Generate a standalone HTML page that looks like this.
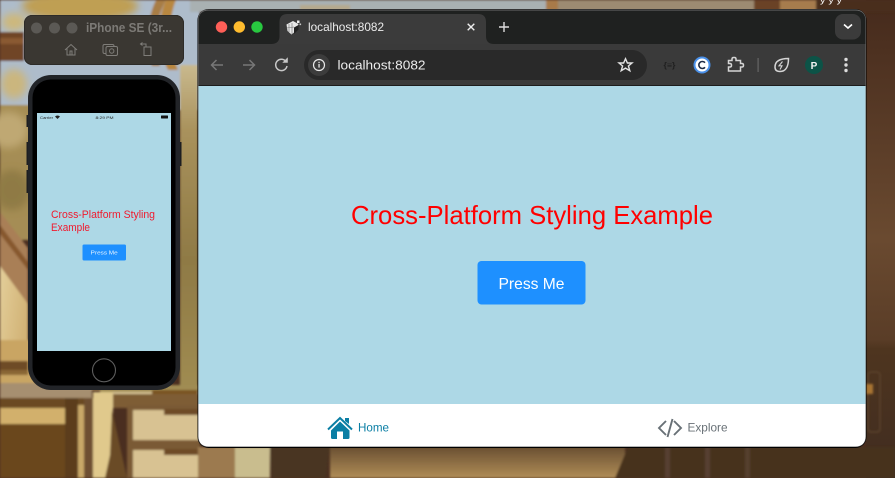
<!DOCTYPE html>
<html><head><meta charset="utf-8"><style>
html,body{margin:0;padding:0;width:895px;height:478px;overflow:hidden;background:#4a2e20}
svg{display:block}
text{font-family:"Liberation Sans",sans-serif}
</style></head><body>
<svg width="895" height="478" viewBox="0 0 895 478" xmlns="http://www.w3.org/2000/svg">
<defs>
<filter id="b" x="-10%" y="-10%" width="120%" height="120%"><feGaussianBlur stdDeviation="1"/></filter>
<filter id="c" x="-30%" y="-30%" width="160%" height="160%"><feGaussianBlur stdDeviation="4"/></filter>
<linearGradient id="rg" x1="0" y1="0" x2="0" y2="1"><stop offset="0" stop-color="#452a1c"/><stop offset=".5" stop-color="#6a4a30"/><stop offset=".71" stop-color="#5a3d27"/><stop offset=".73" stop-color="#4e351f"/><stop offset="1" stop-color="#402c20"/></linearGradient>
<linearGradient id="bg" x1="0" y1="0" x2="0" y2="1"><stop offset="0" stop-color="#6a5032"/><stop offset="1" stop-color="#b08d57"/></linearGradient>
<linearGradient id="lg" x1="0" y1="0" x2="1" y2="1"><stop offset="0" stop-color="#e4cf9a"/><stop offset="1" stop-color="#c59f5e"/></linearGradient>
<linearGradient id="mg" x1="0" y1="0" x2="0" y2="1"><stop offset="0" stop-color="#c9b98e"/><stop offset=".2" stop-color="#a9925c"/><stop offset=".6" stop-color="#8f7a45"/><stop offset="1" stop-color="#a08c52"/></linearGradient>
</defs>

<!-- wallpaper -->
<rect width="895" height="478" fill="#4a2e20"/>
<rect x="866" y="0" width="29" height="478" fill="url(#rg)"/>
<g filter="url(#b)">
<rect x="0" y="0" width="200" height="110" fill="#aebccb"/>
<rect x="190" y="0" width="360" height="12" fill="#a9b1b2"/>
<rect x="300" y="5" width="50" height="6" fill="#b5a98d"/>
<rect x="546" y="0" width="12" height="12" fill="#a87a48"/>
<rect x="558" y="0" width="196" height="12" fill="#9c8b72"/>
<rect x="754" y="0" width="26" height="12" fill="#6a4226"/>
<rect x="780" y="0" width="36" height="12" fill="#a67b4e"/>
<rect x="816" y="0" width="80" height="12" fill="#4a2d1e"/>
<rect x="0" y="105" width="30" height="135" fill="#a58d54"/>
<g filter="url(#c)">
<ellipse cx="80" cy="6" rx="58" ry="16" fill="#bf9f52"/>
<ellipse cx="14" cy="22" rx="12" ry="9" fill="#cdb87c"/>
<ellipse cx="14" cy="84" rx="13" ry="15" fill="#cbb67e"/>
<ellipse cx="8" cy="130" rx="20" ry="18" fill="#bfa873"/>
<ellipse cx="12" cy="190" rx="18" ry="20" fill="#8f7a45"/>
</g>
<rect x="0" y="32" width="24" height="29" fill="#6f4526"/>
<rect x="0" y="38" width="24" height="6" fill="#8a5a32"/>
<path d="M156 0C146 20 146 50 152 66H160C154 45 155 20 166 0Z" fill="#a87d45"/>
<path d="M166 0C156 20 158 50 168 70H178C168 45 168 20 176 0Z" fill="#b8873f"/>
<rect x="180" y="65" width="18" height="325" fill="url(#mg)"/>
<path d="M0 212L28 248V306L0 270Z" fill="#a97f56"/>
<path d="M0 225L28 262V270L0 234Z" fill="#87592f"/>
<path d="M0 266L28 304V478H0Z" fill="url(#lg)"/>
<rect x="0" y="340" width="100" height="50" fill="#c9a564"/>
<rect x="0" y="361" width="28" height="9" fill="#6e4c28"/>
<rect x="0" y="370" width="28" height="5" fill="#8a6636"/>
<rect x="0" y="383" width="92" height="15" fill="#a68f6f"/>
<rect x="100" y="385" width="100" height="8" fill="#a08c52"/>
<rect x="0" y="398" width="84" height="11" fill="#6a4a22"/>
<rect x="0" y="408" width="65" height="16" fill="#d2b06c"/>
<rect x="0" y="424" width="65" height="54" fill="#6a471d"/>
<rect x="65" y="398" width="13" height="80" fill="#5c3e1c"/>
<rect x="78" y="405" width="6" height="73" fill="#c9a868"/>
<rect x="84" y="398" width="9" height="80" fill="#6e5030"/>
<rect x="93" y="392" width="20" height="86" fill="#e0c98c"/>
<path d="M112 410L127 478H105L110 455Z" fill="#6b4c26"/>
<rect x="113" y="392" width="87" height="16" fill="#7e5d36"/>
<rect x="113" y="392" width="87" height="2" fill="#d8c496"/>
<rect x="127" y="405" width="73" height="73" fill="#7a5a35"/>
<rect x="133" y="410" width="67" height="30" fill="#d8c292"/>
<rect x="133" y="450" width="67" height="28" fill="#d8c292"/>
<rect x="164" y="409" width="36" height="6" fill="#6e4c28"/>
<rect x="164" y="449" width="36" height="6" fill="#6e4c28"/>
<rect x="152" y="390" width="46" height="4" fill="#7a5520"/>
<rect x="198" y="447" width="37" height="31" fill="#9c7a50"/>
<rect x="235" y="447" width="35" height="31" fill="#c9bd8e"/>
<path d="M270 447H330L326 478H272Z" fill="#4a3520"/>
<rect x="330" y="447" width="295" height="31" fill="url(#bg)"/>
<path d="M628 447H895V478H615Z" fill="#47301f"/>
<rect x="665" y="447" width="5" height="31" fill="#574030"/>
<rect x="705" y="447" width="5" height="31" fill="#574030"/>
<rect x="745" y="447" width="5" height="31" fill="#54402f"/>
<rect x="868" y="372" width="12" height="60" rx="3" fill="none" stroke="#644a30"/>
<rect x="866" y="384" width="7" height="10" fill="#a87430"/>
</g>
<text x="820" y="3" font-size="8" fill="#fff" textLength="22" lengthAdjust="spacingAndGlyphs">y y y</text>

<!-- simulator toolbar -->
<rect x="24" y="15" width="160" height="50" rx="8" fill="#3a3732"/>
<rect x="24.500" y="15.500" width="159" height="49" rx="7.500" fill="none" stroke="#2d2b28"/>
<circle cx="36.500" cy="28" r="5.500" fill="#5b5955"/><circle cx="54.500" cy="28" r="5.500" fill="#5b5955"/><circle cx="72" cy="28" r="5.500" fill="#5b5955"/>
<text x="86" y="32" font-size="13" font-weight="700" fill="#7c7a76" textLength="86" lengthAdjust="spacingAndGlyphs">iPhone SE (3r...</text>
<g fill="none" stroke="#7f7d79" stroke-width="1">
<path d="M65 50L71 44.500L77 50M67 48.500V55H75V48.500M70 55V51H72V55"/>
<rect x="103" y="44.500" width="11" height="9" rx="1.500"/>
<rect x="106" y="46.500" width="11.500" height="9" rx="1.500" fill="#3a3732"/>
<circle cx="111.700" cy="51" r="2.200"/>
<rect x="144" y="47" width="7" height="8.500"/>
<path d="M146 47V44H141M142.500 42.500L140.500 44L142.500 45.500"/>
</g>

<!-- iPhone -->
<rect x="26.500" y="115" width="2" height="12" fill="#1d1e21"/><rect x="26.500" y="142" width="2" height="23" fill="#1d1e21"/><rect x="26.500" y="170" width="2" height="23" fill="#1d1e21"/>
<rect x="179.500" y="142" width="2" height="24" fill="#1d1e21"/>
<rect x="28" y="75" width="152" height="315" rx="23" fill="#222428"/>
<rect x="32.500" y="79.500" width="143" height="306" rx="18" fill="#000"/>
<rect x="37" y="113" width="134" height="238" fill="#add8e6"/>
<text x="40" y="119" font-size="4" fill="#222" textLength="13" lengthAdjust="spacingAndGlyphs">Carrier</text>
<path d="M55 116.500Q57.500 114.500 60 116.500L57.500 119Z" fill="#222"/>
<text x="95.500" y="119" font-size="4" fill="#222" textLength="18" lengthAdjust="spacingAndGlyphs">8:29 PM</text>
<rect x="161" y="115.500" width="7" height="3" rx=".5" fill="#111"/>
<text x="51" y="218" font-size="11" fill="#f01a2e" textLength="104" lengthAdjust="spacingAndGlyphs">Cross-Platform Styling</text>
<text x="51" y="231" font-size="11" fill="#f01a2e" textLength="39" lengthAdjust="spacingAndGlyphs">Example</text>
<rect x="82.500" y="244.500" width="43.500" height="16" rx="1.500" fill="#1e90ff"/>
<text x="104.200" y="254.500" font-size="5.500" fill="#e8f4ff" text-anchor="middle" textLength="27" lengthAdjust="spacingAndGlyphs">Press Me</text>
<circle cx="104" cy="370.300" r="11.500" fill="none" stroke="#5d5d5d" stroke-width="1.100"/>

<!-- browser -->
<rect x="197.500" y="9" width="669" height="439" rx="11" fill="#000"/>
<rect x="198" y="9.500" width="668" height="437.500" rx="10" fill="#6b6b6b"/>
<path d="M198.500 21Q198.500 10.500 209 10.500H855Q865.500 10.500 865.500 21V86H198.500Z" fill="#1f2120"/>
<rect x="198.500" y="44" width="667" height="41" fill="#3a3a3a"/>
<rect x="198.500" y="85" width="667" height="1" fill="#1c1c1c"/>
<!-- tab -->
<path d="M271 44Q279.500 44 279.500 36V22Q279.500 14 287.500 14H478Q486 14 486 22V36Q486 44 494 44Z" fill="#3b3b3b"/>
<circle cx="221.500" cy="27" r="5.700" fill="#fe5f57"/><circle cx="239.300" cy="27" r="5.700" fill="#febc2e"/><circle cx="257" cy="27" r="5.700" fill="#28c840"/>
<!-- favicon -->
<path d="M286.500 24.500L293 21L298.500 24L296 31L291.500 34.500L287.500 31Z" fill="#e8e8e8"/>
<path d="M294 27.500L298.500 25V29.500L294 34Z" fill="#222"/>
<rect x="297" y="20.500" width="2.500" height="2.500" fill="#eee"/><rect x="299.500" y="23.500" width="1.600" height="1.600" fill="#ccc"/>
<path d="M289 24V32M292 23V34M286.500 28L294 27" stroke="#6a6a6a" stroke-width=".6"/>
<text x="308" y="31" font-size="12" fill="#ececec" textLength="76" lengthAdjust="spacingAndGlyphs">localhost:8082</text>
<path d="M467.700 23.700L474.300 30.300M474.300 23.700L467.700 30.300" stroke="#eee" stroke-width="1.400"/>
<path d="M504 22V32M499 27H509" stroke="#ddd" stroke-width="1.400"/>
<rect x="835" y="14" width="26" height="25.500" rx="8" fill="#3b3b3b"/>
<path d="M844 24.500L848 28L852 24.500" fill="none" stroke="#fff" stroke-width="1.600"/>
<!-- toolbar -->
<g fill="none" stroke="#777" stroke-width="1.500">
<path d="M223 65H212M216.500 60L211.500 65L216.500 70"/>
<path d="M243 65H254M249.500 60L254.500 65L249.500 70"/>
</g>
<path d="M286.300 62A5.700 5.700 0 1 0 287 66" fill="none" stroke="#c8c8c8" stroke-width="1.500"/>
<path d="M283 62.500H287.500V58Z" fill="#c8c8c8" stroke="#c8c8c8" stroke-width=".6"/>
<rect x="304" y="50" width="343" height="30" rx="15" fill="#292929"/>
<circle cx="319" cy="65" r="11" fill="#3c3c3c"/>
<circle cx="319" cy="65" r="5.500" fill="none" stroke="#e8e8e8" stroke-width="1.200"/>
<rect x="318.400" y="64" width="1.300" height="3.600" fill="#e8e8e8"/><rect x="318.400" y="61.800" width="1.300" height="1.300" fill="#e8e8e8"/>
<text x="337.500" y="69.500" font-size="13" fill="#ececec" textLength="88" lengthAdjust="spacingAndGlyphs">localhost:8082</text>
<path d="M625.500 58.700L627.400 63H632L628.400 66L629.800 70.700L625.500 68.100L621.200 70.700L622.600 66L619 63H623.600Z" fill="none" stroke="#e2e2e2" stroke-width="1.400"/>
<text x="669.500" y="68" font-size="8" font-weight="700" fill="#1f1f1f" text-anchor="middle" textLength="12" lengthAdjust="spacingAndGlyphs">{≡}</text>
<circle cx="702" cy="65" r="7.500" fill="#fff"/><circle cx="702" cy="65" r="7.500" fill="none" stroke="#4a90e8" stroke-width="2"/>
<path d="M705 62.700A3.500 3.500 0 1 0 705 67.300" fill="none" stroke="#1d2a44" stroke-width="1.600"/>
<path d="M728.500 60.500H732V59Q732 57.500 733.500 57.500H734.500Q736 57.500 736 59V60.500H740.500V63.500H742Q743.500 63.500 743.500 65.200Q743.500 67 742 67H740.500V71H728.500V67H730Q731.500 67 731.500 65.200Q731.500 63.500 730 63.500H728.500Z" fill="none" stroke="#d5d5d5" stroke-width="1.500"/>
<rect x="757.500" y="58" width="1.200" height="14" fill="#666"/>
<path d="M788.500 58.500C781 58.500 775 60.500 775 67Q775 71.500 780 71.500C786 71.500 788.500 66 788.500 58.500Z" fill="none" stroke="#d5d5d5" stroke-width="1.500"/>
<path d="M782.500 61.500L779 65.800H782L780 69.500" fill="none" stroke="#d5d5d5" stroke-width="1.100"/>
<circle cx="814" cy="65" r="9" fill="#0c5347"/>
<text x="814" y="69" font-size="10" font-weight="700" fill="#f2f2f2" text-anchor="middle">P</text>
<circle cx="846" cy="59.500" r="1.700" fill="#ddd"/><circle cx="846" cy="65" r="1.700" fill="#ddd"/><circle cx="846" cy="70.500" r="1.700" fill="#ddd"/>

<!-- content -->
<rect x="198.500" y="86" width="667" height="318" fill="#add8e6"/>
<text x="351" y="224" font-size="26" fill="#ff0000" textLength="362" lengthAdjust="spacingAndGlyphs">Cross-Platform Styling Example</text>
<rect x="477.500" y="261" width="108" height="43.500" rx="4" fill="#1e90ff"/>
<text x="531.500" y="289" font-size="16" fill="#ffffff" text-anchor="middle" textLength="66" lengthAdjust="spacingAndGlyphs">Press Me</text>

<!-- tabs -->
<path d="M198.500 404H865.500V436Q865.500 446.500 855 446.500H209Q198.500 446.500 198.500 436Z" fill="#fff"/>
<path d="M328 429.500L340 418L352 429.500" fill="none" stroke="#0a7ea4" stroke-width="2"/>
<path d="M345 418H349V424L345 421Z" fill="#0a7ea4"/>
<path d="M340 421.500L349.500 430.500V437.500Q349.500 439 348 439H343V431.500H337V439H332.500Q331 439 331 437.500V430.500Z" fill="#0a7ea4"/>
<text x="358" y="431.500" font-size="12" fill="#0a7ea4" textLength="31" lengthAdjust="spacingAndGlyphs">Home</text>
<path d="M666 421L659 428L666 435M674 421L681 428L674 435M672.500 419L667.500 437" fill="none" stroke="#687076" stroke-width="1.900"/>
<text x="687.500" y="431.500" font-size="12" fill="#687076" textLength="40" lengthAdjust="spacingAndGlyphs">Explore</text>
</svg>
</body></html>
